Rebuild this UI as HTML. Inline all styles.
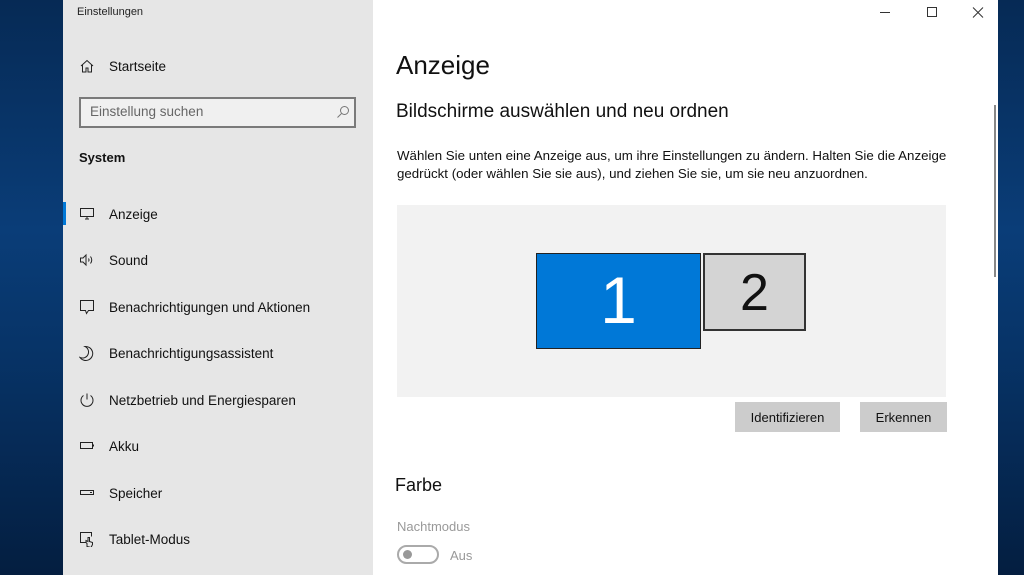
<!DOCTYPE html>
<html><head><meta charset="utf-8"><style>
*{margin:0;padding:0;box-sizing:border-box}
body{width:1024px;height:575px;overflow:hidden;position:relative;font-family:"Liberation Sans",sans-serif;background:linear-gradient(180deg,#062a55 0%,#0a3d78 40%,#073468 60%,#041e40 100%)}
.side{position:absolute;left:63px;top:0;width:310px;height:575px;background:#e6e6e6;color:#000}
.main{position:absolute;left:373px;top:0;width:625px;height:575px;background:#fff}
.t{position:absolute;white-space:nowrap}
.nav{position:absolute;left:0;width:310px;font-size:13.5px;color:#111}
.nav svg{position:absolute;left:16px;top:-1px}
.nav span{position:absolute;left:46px;top:0}
</style></head><body>
<div class="side">
 <div class="t" style="left:14px;top:6px;font-size:11px;color:#222">Einstellungen</div>
 <div class="nav" style="top:59px"><svg width="16" height="16" viewBox="0 0 16 16" fill="none" stroke="#222" stroke-width="1"><path d="M2 8L8 2.5L14 8M3.5 7v7h3.5v-4h2v4h3.5V7"/></svg><span>Startseite</span></div>
 <div style="position:absolute;left:16px;top:97px;width:277px;height:31px;border:2px solid #7a7a7a;background:#f0f0f0"></div>
 <div class="t" style="left:27px;top:104px;font-size:13.5px;color:#666">Einstellung suchen</div>
 <svg style="position:absolute;left:273px;top:105px" width="14" height="14" viewBox="0 0 14 14" fill="none" stroke="#777"><circle cx="8.5" cy="5.5" r="4"/><path d="M5.5 8.5L1.5 12.5"/></svg>
 <div class="t" style="left:16px;top:150px;font-size:13px;font-weight:bold;color:#111">System</div>
 <div style="position:absolute;left:0;top:202px;width:3px;height:23px;background:#0078d7"></div>
 <div class="nav" style="top:207px"><svg width="16" height="16" viewBox="0 0 16 16" fill="none" stroke="#222"><rect x="1.5" y="2.5" width="13" height="8"/><path d="M8 10.5v2M6 13h4"/></svg><span>Anzeige</span></div>
 <div class="nav" style="top:253px"><svg width="16" height="16" viewBox="0 0 16 16" fill="none" stroke="#222"><path d="M1.5 6h2.5l3-3v10l-3-3H1.5z M9.5 6.5q1 1.5 0 3 M11.5 4.5q2.5 3.5 0 7"/></svg><span>Sound</span></div>
 <div class="nav" style="top:300px"><svg width="16" height="16" viewBox="0 0 16 16" fill="none" stroke="#222"><path d="M1.5 1.5h13v10h-5l-2 3-1-3h-5z"/></svg><span>Benachrichtigungen und Aktionen</span></div>
 <div class="nav" style="top:346px"><svg width="16" height="16" viewBox="0 0 16 16" fill="none" stroke="#222"><path d="M6 1.5a7 7 0 1 1-5 11a6 6 0 0 0 5-11z"/></svg><span>Benachrichtigungsassistent</span></div>
 <div class="nav" style="top:393px"><svg width="16" height="16" viewBox="0 0 16 16" fill="none" stroke="#222"><path d="M8 1.5v6M4.5 3.5a6 6 0 1 0 7 0"/></svg><span>Netzbetrieb und Energiesparen</span></div>
 <div class="nav" style="top:439px"><svg width="16" height="16" viewBox="0 0 16 16" fill="none" stroke="#222"><rect x="1.5" y="4.5" width="12" height="6"/><path d="M14.5 6.5v2"/></svg><span>Akku</span></div>
 <div class="nav" style="top:486px"><svg width="16" height="16" viewBox="0 0 16 16" fill="none" stroke="#222"><rect x="1.5" y="5.5" width="13" height="4"/><path d="M11 7.5h2"/></svg><span>Speicher</span></div>
 <div class="nav" style="top:532px"><svg width="16" height="16" viewBox="0 0 16 16" fill="none" stroke="#222"><path d="M7 11.5H1.5v-10h11v4 M8 15.5v-3l-1-1v-2l2 1v-4h1.5v4l3 1v2l-1 2v1z"/></svg><span>Tablet-Modus</span></div>
</div>
<div class="main">
 <svg style="position:absolute;left:507px;top:6px" width="110" height="14" fill="none" stroke="#333"><path d="M0 6.5h10"/><rect x="47.5" y="1.5" width="9" height="9"/><path d="M93 1.5l10 10M103 1.5l-10 10"/></svg>
 <div style="position:absolute;left:621px;top:105px;width:2px;height:172px;background:#888"></div>
 <div class="t" style="left:23px;top:50px;font-size:26px;color:#111">Anzeige</div>
 <div class="t" style="left:23px;top:101px;font-size:19px;color:#111">Bildschirme auswählen und neu ordnen</div>
 <div class="t" style="left:24px;top:147px;font-size:13.3px;line-height:18px;color:#111">Wählen Sie unten eine Anzeige aus, um ihre Einstellungen zu ändern. Halten Sie die Anzeige<br>gedrückt (oder wählen Sie sie aus), und ziehen Sie sie, um sie neu anzuordnen.</div>
 <div style="position:absolute;left:24px;top:205px;width:549px;height:192px;background:#f2f2f2"></div>
 <div style="position:absolute;left:163px;top:253px;width:165px;height:96px;background:#0078d7;border:1px solid #222;color:#fff;font-size:66px;text-align:center;line-height:92px;font-weight:300">1</div>
 <div style="position:absolute;left:330px;top:253px;width:103px;height:78px;background:#d4d4d4;border:2px solid #333;color:#111;font-size:52px;text-align:center;line-height:76px">2</div>
 <div style="position:absolute;left:362px;top:402px;width:105px;height:30px;background:#ccc;font-size:13px;text-align:center;line-height:31px;color:#111">Identifizieren</div>
 <div style="position:absolute;left:487px;top:402px;width:87px;height:30px;background:#ccc;font-size:13px;text-align:center;line-height:31px;color:#111">Erkennen</div>
 <div class="t" style="left:22px;top:475px;font-size:18px;color:#111">Farbe</div>
 <div class="t" style="left:24px;top:519px;font-size:13px;color:#999">Nachtmodus</div>
 <div style="position:absolute;left:24px;top:545px;width:42px;height:19px;border:2px solid #aaa;border-radius:10px"></div>
 <div style="position:absolute;left:30px;top:550px;width:9px;height:9px;border-radius:50%;background:#999"></div>
 <div class="t" style="left:77px;top:548px;font-size:13px;color:#999">Aus</div>
</div>
</body></html>
